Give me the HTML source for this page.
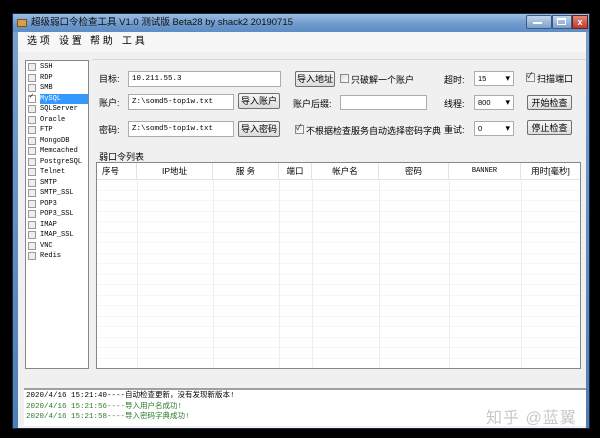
<!DOCTYPE html>
<html><head><meta charset="utf-8"><style>
*{box-sizing:border-box;margin:0;padding:0}
body{width:600px;height:438px;background:#000;position:relative;overflow:hidden;font-family:"Liberation Sans","Noto Sans CJK SC",sans-serif;font-size:9px;color:#000}
.a{position:absolute}
.win{left:12px;top:13px;width:578px;height:416px;background:linear-gradient(#7aa2d2,#4f7db5);border:1px solid #1a2a40}
.title{left:13px;top:14px;width:576px;height:18px;background:linear-gradient(#9cbce2,#6b98cc 60%,#5f8cc4);color:#111;font-size:9.5px;line-height:18px;padding-left:18px}
.client{left:18px;top:32px;width:568px;height:396px;background:#f0f0f0}
.menu{left:18px;top:32px;width:568px;height:20px;background:#f7f7f7;font-size:10px;line-height:20px}
.menu span{position:absolute}
.inp{background:#fff;border:1px solid #abadb3;font-family:"Liberation Mono",monospace;font-size:7.5px;line-height:14px;padding-left:3px}
.btn{background:linear-gradient(#f6f6f6,#dcdcdc);border:1px solid #707070;border-radius:2px;text-align:center;font-size:9px;line-height:14px}
.cb{width:9px;height:9px;border:1px solid #8a8a8a;background:linear-gradient(135deg,#ddd,#fff)}
.sel{background:#fff;border:1px solid #abadb3;font-size:7.5px;line-height:13px;padding-left:3px}
.sel:after{content:"▾";position:absolute;right:3px;top:0;font-size:9px}
.list{left:25px;top:60px;width:64px;height:309px;background:#fff;border:1px solid #828790}
.li{position:absolute;left:2px;height:10px;font-family:"Liberation Mono",monospace;font-size:7px;line-height:10px;padding-left:12px;white-space:nowrap}
.li i{position:absolute;left:0;top:1px;width:8px;height:8px;border:1px solid #999;background:#eee}
.tbl{left:96px;top:162px;width:485px;height:207px;background:#fff;border:1px solid #828790}
.hd{position:absolute;top:0;height:17px;line-height:17px;text-align:center;font-size:8.5px;border-right:1px solid #e3e3e3}
.log{left:24px;top:388px;width:562px;height:38px;background:#fff;border-top:2px solid #a0a0a0;font-family:"Liberation Mono","Noto Sans CJK SC",monospace;font-size:7.5px;line-height:10.5px;padding:1px 2px}
</style></head><body>
<div class="a win"></div>
<div class="a title"><span class="a" style="left:4px;top:5px;width:10px;height:8px;background:#d8a040;border:1px solid #805020"></span>超级弱口令检查工具 V1.0 测试版 Beta28 by shack2 20190715</div>
<div class="a" style="left:526px;top:15px;width:26px;height:14px;background:linear-gradient(#c0d6ee,#7d9fc8);border:1px solid #3b5a85;border-radius:2px"></div>
<div class="a" style="left:533px;top:22px;width:9px;height:2px;background:#fff"></div>
<div class="a" style="left:552px;top:15px;width:20px;height:14px;background:linear-gradient(#c0d6ee,#7d9fc8);border:1px solid #3b5a85"></div>
<div class="a" style="left:557px;top:18px;width:9px;height:7px;border:1px solid #fff;border-top-width:2px"></div>
<div class="a" style="left:572px;top:15px;width:16px;height:14px;background:linear-gradient(#e08a7a,#c0392b);border:1px solid #6b2015;color:#fff;font-size:9px;line-height:12px;text-align:center;font-weight:bold">x</div>
<div class="a client"></div>
<div class="a menu"><span style="left:9px">选 项</span><span style="left:41px">设 置</span><span style="left:72px">帮 助</span><span style="left:104px">工 具</span></div>
<div class="a" style="left:92px;top:59px;width:494px;height:1px;background:#d8d8d8"></div>

<div class="a list">
<div class="li" style="top:1px"><i></i>SSH</div>
<div class="li" style="top:11.5px"><i></i>RDP</div>
<div class="li" style="top:22px"><i></i>SMB</div>
<div class="li" style="top:32.5px;width:60px;padding-left:12px"><i style="background:#fff"></i><span style="background:#3399ff;color:#fff;display:inline-block;width:48px">MySQL</span><span class="a" style="left:1px;top:-2px;font-size:8px;color:#223">✓</span></div>
<div class="li" style="top:43px"><i></i>SQLServer</div>
<div class="li" style="top:53.5px"><i></i>Oracle</div>
<div class="li" style="top:64px"><i></i>FTP</div>
<div class="li" style="top:74.5px"><i></i>MongoDB</div>
<div class="li" style="top:85px"><i></i>Memcached</div>
<div class="li" style="top:95.5px"><i></i>PostgreSQL</div>
<div class="li" style="top:106px"><i></i>Telnet</div>
<div class="li" style="top:116.5px"><i></i>SMTP</div>
<div class="li" style="top:127px"><i></i>SMTP_SSL</div>
<div class="li" style="top:137.5px"><i></i>POP3</div>
<div class="li" style="top:148px"><i></i>POP3_SSL</div>
<div class="li" style="top:158.5px"><i></i>IMAP</div>
<div class="li" style="top:169px"><i></i>IMAP_SSL</div>
<div class="li" style="top:179.5px"><i></i>VNC</div>
<div class="li" style="top:190px"><i></i>Redis</div>
</div>

<div class="a" style="left:99px;top:72px">目标:</div>
<div class="a inp" style="left:128px;top:71px;width:153px;height:16px">10.211.55.3</div>
<div class="a" style="left:99px;top:96px">账户:</div>
<div class="a inp" style="left:128px;top:94px;width:106px;height:16px">Z:\somd5-top1w.txt</div>
<div class="a btn" style="left:238px;top:93px;width:42px;height:16px">导入账户</div>
<div class="a" style="left:99px;top:123px">密码:</div>
<div class="a inp" style="left:128px;top:121px;width:106px;height:16px">Z:\somd5-top1w.txt</div>
<div class="a btn" style="left:238px;top:121px;width:42px;height:16px">导入密码</div>
<div class="a" style="left:99px;top:150px">弱口令列表</div>

<div class="a btn" style="left:295px;top:71px;width:40px;height:16px">导入地址</div>
<div class="a cb" style="left:340px;top:74px"></div>
<div class="a" style="left:351px;top:73px">只破解一个账户</div>
<div class="a" style="left:293px;top:97px">账户后缀:</div>
<div class="a inp" style="left:340px;top:95px;width:87px;height:15px"></div>
<div class="a cb" style="left:295px;top:125px"></div><div class="a" style="left:296px;top:122px;font-size:8px;color:#223">✓</div>
<div class="a" style="left:306px;top:124px">不根据检查服务自动选择密码字典</div>

<div class="a" style="left:444px;top:73px">超时:</div>
<div class="a sel" style="left:474px;top:71px;width:40px;height:15px">15</div>
<div class="a cb" style="left:526px;top:73px"></div><div class="a" style="left:527px;top:70px;font-size:8px;color:#223">✓</div>
<div class="a" style="left:537px;top:72px">扫描端口</div>
<div class="a" style="left:444px;top:97px">线程:</div>
<div class="a sel" style="left:474px;top:95px;width:40px;height:15px">800</div>
<div class="a btn" style="left:527px;top:95px;width:45px;height:15px">开始检查</div>
<div class="a" style="left:444px;top:123px">重试:</div>
<div class="a sel" style="left:474px;top:121px;width:40px;height:15px">0</div>
<div class="a btn" style="left:527px;top:120px;width:45px;height:15px">停止检查</div>

<div class="a tbl" style="background:#fff repeating-linear-gradient(#fff 0 10px,#ececec 10px 10.5px);background-position:0 17px">
<div class="a" style="left:0;top:0;width:483px;height:17px;background:#fff;border-bottom:1px solid #e3e3e3"></div>
<div class="hd" style="left:0;width:40px;text-align:left;padding-left:5px">序号</div>
<div class="hd" style="left:40px;width:76px">IP地址</div>
<div class="hd" style="left:116px;width:66px">服 务</div>
<div class="hd" style="left:182px;width:33px">端口</div>
<div class="hd" style="left:215px;width:67px">帐户名</div>
<div class="hd" style="left:282px;width:70px">密码</div>
<div class="hd" style="left:352px;width:72px;font-family:'Liberation Mono';font-size:7px">BANNER</div>
<div class="hd" style="left:424px;width:59px;border-right:none">用时[毫秒]</div>
<div class="a" style="left:40px;top:17px;width:1px;height:188px;background:#eee"></div>
<div class="a" style="left:116px;top:17px;width:1px;height:188px;background:#eee"></div>
<div class="a" style="left:182px;top:17px;width:1px;height:188px;background:#eee"></div>
<div class="a" style="left:215px;top:17px;width:1px;height:188px;background:#eee"></div>
<div class="a" style="left:282px;top:17px;width:1px;height:188px;background:#eee"></div>
<div class="a" style="left:352px;top:17px;width:1px;height:188px;background:#eee"></div>
<div class="a" style="left:424px;top:17px;width:1px;height:188px;background:#eee"></div>
</div>

<div class="a log">
<div>2020/4/16 15:21:40----自动检查更新，没有发现新版本!</div>
<div style="color:#2a7a2a">2020/4/16 15:21:56----导入用户名成功!</div>
<div style="color:#2a7a2a">2020/4/16 15:21:58----导入密码字典成功!</div>
</div>
<div class="a" style="left:486px;top:404px;font-size:16px;color:#c8c8c8;letter-spacing:1px">知乎 @蓝翼</div>
</body></html>
